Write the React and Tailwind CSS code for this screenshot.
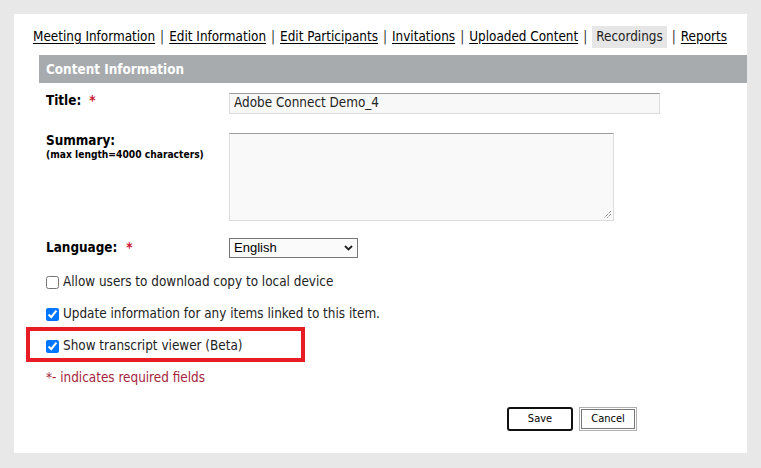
import React from "react";

const F = { fontFamily: '"DejaVu Sans Condensed", "DejaVu Sans", sans-serif' };

function Sep() {
  return <span className="mx-[5px] text-[#333]">|</span>;
}

function Check({ checked, children }) {
  return (
    <label className="flex items-center h-[20px] text-[13.4px] text-[#222]">
      <input
        type="checkbox"
        defaultChecked={checked}
        className="m-0 w-[13px] h-[13px] accent-[#0075ff]"
      />
      <span className="ml-[4px]">{children}</span>
    </label>
  );
}

export default function App() {
  return (
    <div
      className="w-[761px] h-[468px] bg-[#e8e8e8] pt-[14px] pl-[14px]"
      style={F}
    >
      <div className="w-[733px] h-[439px] bg-white flex flex-col">
        {/* Nav */}
        <div className="mt-[12px] ml-[19px] h-[22px] flex items-center text-[13.4px] text-black">
          <span className="underline underline-offset-2">Meeting Information</span>
          <Sep />
          <span className="underline underline-offset-2">Edit Information</span>
          <Sep />
          <span className="underline underline-offset-2">Edit Participants</span>
          <Sep />
          <span className="underline underline-offset-2">Invitations</span>
          <Sep />
          <span className="underline underline-offset-2">Uploaded Content</span>
          <Sep />
          <span className="bg-[#e6e6e6] h-[22px] px-[4px] flex items-center text-[#222]">
            Recordings
          </span>
          <Sep />
          <span className="underline underline-offset-2">Reports</span>
        </div>

        {/* Header bar */}
        <div className="mt-[7px] ml-[25px] h-[28px] bg-[#a7abae] flex items-center pl-[7px] pt-[2px] text-[13.4px] font-bold text-white">
          Content Information
        </div>

        {/* Form */}
        <div className="ml-[32px] flex flex-col">
          {/* Title */}
          <div className="mt-[10px] flex">
            <div className="w-[183px] text-[13.4px] font-bold text-black leading-[15px]">
              Title:<span className="ml-[8px] text-[#c8102e]">*</span>
            </div>
            <div className="w-[431px] h-[21px] bg-[#f8f8f8] border border-[#dcdcdc] border-t-[#9a9a9a] flex items-center pl-[4px] text-[13.4px] text-[#222]">
              Adobe Connect Demo_4
            </div>
          </div>

          {/* Summary */}
          <div className="mt-[19px] flex">
            <div className="w-[183px] flex flex-col">
              <span className="text-[13.4px] font-bold text-black leading-[15px]">Summary:</span>
              <span className="text-[10.2px] font-bold text-black leading-[13px]">
                (max length=4000 characters)
              </span>
            </div>
            <div className="relative w-[385px] h-[88px] bg-[#f9f9f9] border border-[#dcdcdc] border-t-[#9a9a9a]">
              <svg
                className="absolute right-[1px] bottom-[1px]"
                width="9"
                height="9"
                viewBox="0 0 9 9"
              >
                <path d="M8 1 L1 8 M8 4 L4 8" stroke="#555" strokeWidth="1" strokeDasharray="1 1" />
              </svg>
            </div>
          </div>

          {/* Language */}
          <div className="mt-[17px] flex items-center">
            <div className="w-[183px] text-[13.4px] font-bold text-black">
              Language:<span className="ml-[9px] text-[#c8102e]">*</span>
            </div>
            <div
              className="w-[129px] h-[20px] border border-[#767676] bg-[#fafafa] flex items-center justify-between pl-[4px] pr-[4px] text-[13px] text-black"
              style={{ fontFamily: '"Liberation Sans", Arial, sans-serif' }}
            >
              <span>English</span>
              <svg width="9" height="6" viewBox="0 0 9 6">
                <path d="M1 1 L4.5 4.5 L8 1" fill="none" stroke="#222" strokeWidth="1.8" />
              </svg>
            </div>
          </div>

          {/* Checkboxes */}
          <div className="mt-[14px]">
            <Check checked={false}>Allow users to download copy to local device</Check>
          </div>
          <div className="mt-[12px]">
            <Check checked={true}>Update information for any items linked to this item.</Check>
          </div>
          <div className="mt-[12px] relative">
            <Check checked={true}>Show transcript viewer (Beta)</Check>
            <div className="absolute left-[-20px] top-[-9px] w-[279px] h-[35px] border-[4px] border-[#e81c24]" />
          </div>

          {/* Required note */}
          <div className="mt-[12px] h-[20px] flex items-center text-[13.4px] text-[#a3243b]">
            *- indicates required fields
          </div>

          {/* Buttons */}
          <div className="mt-[19px] ml-[461px] flex gap-[6px]">
            <div className="w-[66px] h-[24px] border-[2px] border-[#111] rounded-[3px] flex items-center justify-center text-[11px] text-black">
              Save
            </div>
            <div className="w-[58px] h-[24px] border border-[#b0b0b0] p-[1px] flex">
              <div className="flex-1 border border-[#777] flex items-center justify-center text-[11px] text-black">
                Cancel
              </div>
            </div>
          </div>
        </div>
      </div>
    </div>
  );
}
